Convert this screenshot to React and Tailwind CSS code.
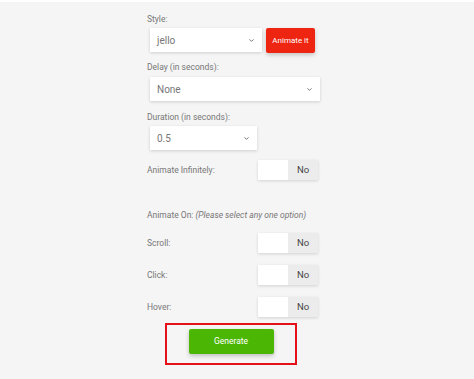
import React from "react";
import { ChevronDown } from "lucide-react";

const Label = ({ children, className = "" }) => (
  <div className={`text-[8.5px] leading-[12px] text-[#777] ${className}`}>{children}</div>
);

const Select = ({ value, width }) => (
  <div
    className={`flex items-center justify-between bg-white h-[24px] pl-[7px] pr-[7px] shadow-[0_1px_3px_rgba(0,0,0,0.16)] ${width}`}
  >
    <span className="text-[10px] text-[#777]">{value}</span>
    <ChevronDown size={7} strokeWidth={3} className="text-[#666]" />
  </div>
);

const Toggle = () => (
  <div className="flex h-[20px] w-[60px] shadow-[0_1px_3px_rgba(0,0,0,0.14)]">
    <div className="w-[30px] bg-white"></div>
    <div className="w-[30px] bg-[#ececec] flex items-center justify-center text-[9.5px] text-[#444]">
      No
    </div>
  </div>
);

const Row = ({ label, className = "" }) => (
  <div className={`flex items-center w-[171px] justify-between ${className}`}>
    <Label>{label}</Label>
    <Toggle />
  </div>
);

export default function App() {
  return (
    <div
      className="min-h-screen bg-[#f5f5f5] border-t-2 border-white"
      style={{ fontFamily: "Roboto, 'Liberation Sans', sans-serif" }}
    >
      <div className="flex flex-col pl-[147px] pt-[11px]">
        <Label>Style:</Label>
        <div className="flex mt-[3px] ml-[3px] gap-[4px]">
          <Select value="jello" width="w-[112px]" />
          <div className="w-[49px] h-[25px] bg-[#ee2510] rounded-[2px] flex items-center justify-center text-[8px] whitespace-nowrap text-white shadow-[0_2px_4px_rgba(0,0,0,0.2)]">
            Animate it
          </div>
        </div>

        <Label className="mt-[8px]">Delay (in seconds):</Label>
        <div className="mt-[4px] ml-[3px]">
          <Select value="None" width="w-[170px]" />
        </div>

        <Label className="mt-[10px]">Duration (in seconds):</Label>
        <div className="mt-[3px] ml-[3px]">
          <Select value="0.5" width="w-[107px]" />
        </div>

        <Row label="Animate Infinitely:" className="mt-[10px]" />

        <Label className="mt-[29px]">
          Animate On: <span className="italic">(Please select any one option)</span>
        </Label>

        <Row label="Scroll:" className="mt-[12px]" />
        <Row label="Click:" className="mt-[12px]" />
        <Row label="Hover:" className="mt-[12px]" />

        <div className="ml-[18px] mt-[6px] w-[132px] h-[42px] border-2 border-[#e4101a] flex justify-center pt-[4px]">
          <div className="w-[85px] h-[25px] bg-[#4cb604] rounded-[2px] flex items-center justify-center text-[8.5px] text-white shadow-[0_2px_4px_rgba(0,0,0,0.22)]">
            Generate
          </div>
        </div>
      </div>
    </div>
  );
}
